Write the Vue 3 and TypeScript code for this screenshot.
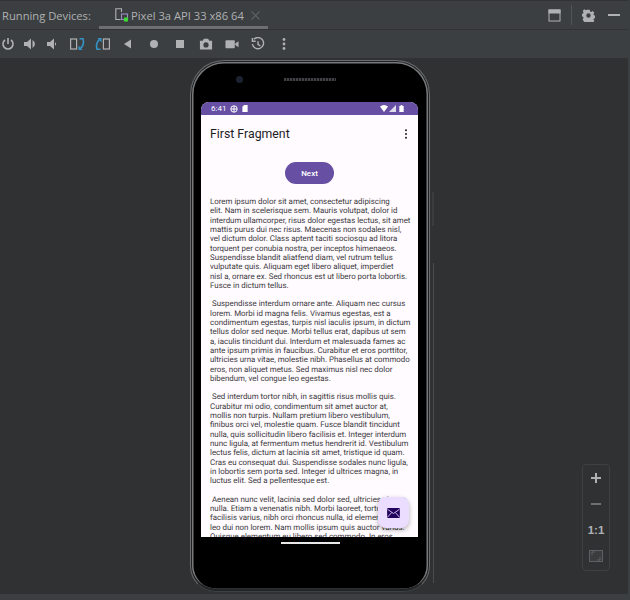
<script setup lang="ts">
const paragraphs: string[][] = [
  [
    'Lorem ipsum dolor sit amet, consectetur adipiscing',
    'elit. Nam in scelerisque sem. Mauris volutpat, dolor id',
    'interdum ullamcorper, risus dolor egestas lectus, sit amet',
    'mattis purus dui nec risus. Maecenas non sodales nisl,',
    'vel dictum dolor. Class aptent taciti sociosqu ad litora',
    'torquent per conubia nostra, per inceptos himenaeos.',
    'Suspendisse blandit aliatfend diam, vel rutrum tellus',
    'vulputate quis. Aliquam eget libero aliquet, imperdiet',
    'nisl a, ornare ex. Sed rhoncus est ut libero porta lobortis.',
    'Fusce in dictum tellus.',
  ],
  [
    ' Suspendisse interdum ornare ante. Aliquam nec cursus',
    'lorem. Morbi id magna felis. Vivamus egestas, est a',
    'condimentum egestas, turpis nisl iaculis ipsum, in dictum',
    'tellus dolor sed neque. Morbi tellus erat, dapibus ut sem',
    'a, iaculis tincidunt dui. Interdum et malesuada fames ac',
    'ante ipsum primis in faucibus. Curabitur et eros porttitor,',
    'ultricies urna vitae, molestie nibh. Phasellus at commodo',
    'eros, non aliquet metus. Sed maximus nisl nec dolor',
    'bibendum, vel congue leo egestas.',
  ],
  [
    ' Sed interdum tortor nibh, in sagittis risus mollis quis.',
    'Curabitur mi odio, condimentum sit amet auctor at,',
    'mollis non turpis. Nullam pretium libero vestibulum,',
    'finibus orci vel, molestie quam. Fusce blandit tincidunt',
    'nulla, quis sollicitudin libero facilisis et. Integer interdum',
    'nunc ligula, at fermentum metus hendrerit id. Vestibulum',
    'lectus felis, dictum at lacinia sit amet, tristique id quam.',
    'Cras eu consequat dui. Suspendisse sodales nunc ligula,',
    'in lobortis sem porta sed. Integer id ultrices magna, in',
    'luctus elit. Sed a pellentesque est.',
  ],
  [
    ' Aenean nunc velit, lacinia sed dolor sed, ultricies viverra',
    'nulla. Etiam a venenatis nibh. Morbi laoreet, tortor a',
    'facilisis varius, nibh orci rhoncus nulla, id elementum',
    'leo dui non lorem. Nam mollis ipsum quis auctor varius.',
    'Quisque elementum eu libero sed commodo. In eros',
  ],
]
</script>

<template>
  <div class="window">
    <header class="tabs">
      <span class="title">Running Devices:</span>
      <div class="tab">
        <svg class="tab-icon" width="14" height="14" viewBox="0 0 14 14" fill="none">
          <path d="M5.500 11.500H.8V.8H6.500V4" stroke="#afb1b3" stroke-width="1.100" />
          <rect x="6.500" y="6" width="6" height="5.500" stroke="#9a8cc0" stroke-width="1.100" />
          <rect x="9" y="9.500" width="4" height="4" fill="#3ddc35" />
        </svg>
        <span class="tab-label">Pixel 3a API 33 x86 64</span>
        <svg class="tab-close" width="9" height="9" viewBox="0 0 9 9">
          <path d="M.5.5L8.500 8.500M8.500.5L.5 8.500" stroke="#5f6365" stroke-width="1.100" />
        </svg>
      </div>
      <div class="tab-actions">
        <svg width="13" height="13" viewBox="0 0 13 13" fill="none">
          <rect x="1" y="1" width="11" height="11" stroke="#afb1b3" />
          <rect x=".5" y=".5" width="12" height="4" fill="#afb1b3" />
        </svg>
        <i class="divider"></i>
        <svg width="13" height="13" viewBox="0 0 14 14">
          <path fill="#afb1b3" fill-rule="evenodd" d="M5.700.8h2.600l.4 1.800 1.200.5 1.600-1 1.800 1.900-1 1.500.5 1.200 1.800.4v2.600l-1.800.4-.5 1.200 1 1.500-1.800 1.900-1.600-1-1.200.5-.4 1.800H5.700l-.4-1.800-1.200-.5-1.600 1L.7 11l1-1.500-.5-1.200-1.800-.4V5.300l1.800-.4.5-1.200-1-1.500L2.500.3l1.600 1 1.200-.5zM7 4.600a2.400 2.400 0 1 0 0 4.800 2.400 2.400 0 0 0 0-4.800z" />
        </svg>
        <i class="minimize"></i>
      </div>
    </header>

    <nav class="toolbar">
      <svg class="tight" width="14" height="14" viewBox="0 0 14 14" fill="none" stroke="#afb1b3" stroke-width="1.600">
        <path d="M7 1v6M4 3a5 5 0 1 0 6 0" />
      </svg>
      <svg class="tight" width="14" height="14" viewBox="0 0 14 14" fill="#afb1b3">
        <path d="M1 5h3l4-3.500v11L4 9H1z" />
        <path d="M9.500 3a4.500 4.500 0 0 1 0 8z" />
      </svg>
      <svg class="before-rotate" width="14" height="14" viewBox="0 0 14 14" fill="#afb1b3">
        <path d="M2 5h3l4-3.500v11L5 9H2z" />
        <path d="M10 5.200a2 2 0 0 1 0 3.600z" />
      </svg>
      <svg class="rotate-left" width="15" height="14" viewBox="0 0 15 14" fill="none">
        <rect x=".6" y="2" width="6" height="10" stroke="#afb1b3" stroke-width="1.200" />
        <path d="M9.500 1.800H13l.5 3c0 3-1 5-3 6.500" stroke="#3592c4" stroke-width="1.600" />
        <path d="M8.500 8.500l4 4.500H8.500z" fill="#3592c4" />
      </svg>
      <svg class="rotate-right" width="15" height="14" viewBox="0 0 15 14" fill="none">
        <rect x="8.400" y="2" width="6" height="10" stroke="#afb1b3" stroke-width="1.200" />
        <path d="M5.500 12.200H2l-.5-3c0-3 1-5 3-6.500" stroke="#3592c4" stroke-width="1.600" />
        <path d="M6.500 5.500L2.500 1H6.500z" fill="#3592c4" />
      </svg>
      <svg width="14" height="14" viewBox="0 0 14 14" fill="#afb1b3"><path d="M3 7l7-4.500v9z" /></svg>
      <svg width="14" height="14" viewBox="0 0 14 14" fill="#afb1b3"><circle cx="7" cy="7" r="4" /></svg>
      <svg width="14" height="14" viewBox="0 0 14 14" fill="#afb1b3"><rect x="3" y="3" width="8" height="8" /></svg>
      <svg width="14" height="14" viewBox="0 0 15 14">
        <path fill="#afb1b3" fill-rule="evenodd" d="M1 3.500h3L5.200 1.500h4.600L11 3.500h3V13H1zM7.500 5.200a2.800 2.800 0 1 0 0 5.600 2.800 2.800 0 0 0 0-5.600z" />
      </svg>
      <svg width="14" height="14" viewBox="0 0 15 14" fill="#afb1b3">
        <rect x=".5" y="3" width="10" height="8.500" rx="1" />
        <path d="M11 6.500l3.500-2.500v6.500L11 8z" />
      </svg>
      <svg width="14" height="14" viewBox="0 0 15 15" fill="none" stroke="#afb1b3" stroke-width="1.500">
        <path d="M3 2.500a6 6 0 1 1-1.500 5" />
        <path d="M1.500 1v3.500H5M7.500 4.500V8l2.500 1.500" />
      </svg>
      <svg width="14" height="14" viewBox="0 0 14 14" fill="#afb1b3">
        <circle cx="7" cy="2.500" r="1.400" />
        <circle cx="7" cy="7" r="1.400" />
        <circle cx="7" cy="11.500" r="1.400" />
      </svg>
    </nav>

    <main class="canvas">
      <div class="phone">
        <i class="side-key"></i>
        <i class="side-line"></i>
        <div class="bezel-top">
          <i class="camera"></i>
          <i class="speaker"></i>
        </div>
        <div class="screen">
          <div class="status">
            <span class="clock">6:41</span>
            <svg width="8" height="8" viewBox="0 0 8 8" fill="none" stroke="#fff">
              <circle cx="4" cy="4" r="3.200" />
              <path d="M4 1v6M1 4h6" />
            </svg>
            <svg class="sd" width="6" height="7" viewBox="0 0 6 8" fill="#fff"><path d="M2 0h4v8H0V2z" /></svg>
            <span class="status-right">
              <svg width="8" height="7" viewBox="0 0 8 7" fill="#fff"><path d="M0 1.500C2.500-.5 5.500-.5 8 1.500L4 7z" /></svg>
              <svg width="7" height="7" viewBox="0 0 7 7" fill="#fff"><path d="M7 0v7H0z" opacity=".8" /></svg>
              <svg class="battery" width="5" height="7" viewBox="0 0 5 8" fill="#fff"><path d="M1.500 0h2v1H5v7H0V1h1.500z" /></svg>
            </span>
          </div>
          <div class="appbar">
            <span class="appbar-title">First Fragment</span>
            <svg width="4" height="10" viewBox="0 0 4 10" fill="#1c1b1f">
              <circle cx="2" cy="1.300" r="1" />
              <circle cx="2" cy="5" r="1" />
              <circle cx="2" cy="8.700" r="1" />
            </svg>
          </div>
          <div class="content">
            <button class="next">Next</button>
            <p v-for="(lines, i) in paragraphs" :key="i" class="para">
              <span v-for="line in lines" :key="line" class="line">{{ line }}</span>
            </p>
          </div>
          <div class="fab">
            <svg width="13" height="10" viewBox="0 0 14 11">
              <rect width="14" height="11" rx="1" fill="#21005d" />
              <path d="M.5 1.500L7 6l6.500-4.500M.5 10L5 5M13.500 10L9 5" stroke="#eaddff" stroke-width=".9" fill="none" />
            </svg>
          </div>
        </div>
        <div class="bezel-bottom"><i class="home"></i></div>
      </div>

      <aside class="zoom">
        <span class="zoom-item"><svg width="12" height="12" viewBox="0 0 12 12" fill="#afb1b3"><path d="M5 1h2v4h4v2H7v4H5V7H1V5h4z" /></svg></span>
        <span class="zoom-item"><svg width="12" height="12" viewBox="0 0 12 12" fill="#6e7072"><rect x="1" y="5" width="10" height="2" /></svg></span>
        <span class="zoom-item one-to-one">1:1</span>
        <span class="zoom-item">
          <span class="fit"><svg width="10" height="10" viewBox="0 0 10 10" fill="none" stroke="#5e6163"><path d="M1 4V1h3M9 6v3H6" /></svg></span>
        </span>
      </aside>
    </main>

    <footer class="statusbar"></footer>
  </div>
</template>

<style>
html,
body {
  margin: 0;
  background: #2f3133;
}
</style>

<style scoped>
.window {
  width: 630px;
  height: 600px;
  overflow: hidden;
  display: flex;
  flex-direction: column;
  background: #2f3133;
  font-family: "Open Sans", "Liberation Sans", sans-serif;
  border-right: 2px solid #3c3f41;
  box-sizing: border-box;
}

.tabs {
  height: 29px;
  flex: none;
  display: flex;
  align-items: center;
  background: #3c3f41;
  border-top: 1px solid #323232;
  box-sizing: border-box;
  color: #afb1b3;
  font-size: 11.200px;
  white-space: nowrap;
}

.title {
  width: 99px;
  padding-left: 2px;
  box-sizing: border-box;
}

.tab {
  display: flex;
  align-items: center;
  height: 100%;
  width: 169px;
  padding: 3px 0 0 16px;
  box-sizing: border-box;
  border-bottom: 3px solid #6b6f72;
}

.tab-label {
  margin-left: 2px;
}

.tab-close {
  margin-left: 7px;
}

.tab-actions {
  margin-left: auto;
  display: flex;
  align-items: center;
  gap: 10px;
  padding-right: 8px;
}

.divider {
  width: 1px;
  height: 20px;
  background: #515557;
}

.minimize {
  width: 12px;
  height: 2px;
  margin-left: 3px;
  background: #afb1b3;
}

.toolbar {
  height: 30px;
  flex: none;
  display: flex;
  align-items: center;
  gap: 12px;
  padding-left: 1px;
  background: #3c3f41;
  border-top: 1px solid #323232;
  border-bottom: 1px solid #323232;
  box-sizing: border-box;
}

.tight {
  margin-right: -4px;
}

.before-rotate {
  margin-right: -1.500px;
}

.rotate-left {
  margin-right: -2px;
}

.rotate-right {
  margin-right: -0.500px;
}

.canvas {
  flex: 1;
  min-height: 0;
  position: relative;
  display: flex;
  justify-content: center;
  padding-top: 1px;
}

.phone {
  position: relative;
  width: 240px;
  height: 532px;
  margin-right: 8px;
  box-sizing: border-box;
  background: #000;
  border: 1px solid #6a6c6e;
  border-bottom-color: #3e4042;
  border-radius: 34px 34px 26px 26px;
  box-shadow: inset 0 -2.500px 0 #242526, inset 0 0 0 1px #1e1f20, inset 0 0 0 2.500px #77797b;
  display: flex;
  flex-direction: column;
  align-items: center;
}

.side-key {
  position: absolute;
  left: 241px;
  top: 131px;
  width: 2px;
  height: 34px;
  background: #3a3c3e;
}

.side-line {
  position: absolute;
  left: 242px;
  top: 202px;
  width: 1px;
  height: 320px;
  background: #4a4c4e;
}

.bezel-top {
  height: 41px;
  width: 100%;
  flex: none;
  position: relative;
}

.camera {
  position: absolute;
  left: 45px;
  top: 15px;
  width: 7px;
  height: 7px;
  border-radius: 50%;
  background: #1d2230;
}

.speaker {
  position: absolute;
  left: 93px;
  top: 17px;
  width: 52px;
  height: 3px;
  background: repeating-linear-gradient(90deg, #3f4144 0 2px, #15161a 2px 3px);
}

.screen {
  width: 217px;
  height: 435px;
  flex: none;
  margin-right: 1px;
  position: relative;
  overflow: hidden;
  border-radius: 8px 8px 0 0;
  background: #fffbfe;
  display: flex;
  flex-direction: column;
}

.status {
  height: 13px;
  flex: none;
  display: flex;
  align-items: center;
  gap: 3px;
  padding: 0 14px 0 10px;
  background: #6750a4;
  color: #fff;
  font: 8px Roboto, sans-serif;
}

.clock {
  margin-right: 1px;
}

.sd {
  margin-left: 1px;
}

.status-right {
  margin-left: auto;
  display: flex;
  align-items: center;
  gap: 1px;
}

.battery {
  margin-left: 2px;
}

.appbar {
  height: 37px;
  flex: none;
  display: flex;
  align-items: center;
  justify-content: space-between;
  padding: 0 10px 0 9px;
  color: #1c1b1f;
  font: 12.300px Roboto, sans-serif;
}

.content {
  display: flex;
  flex-direction: column;
  align-items: flex-start;
  padding: 10px 0 0 9px;
}

.next {
  align-self: center;
  margin: 0 0 13px -9px;
  width: 49px;
  height: 22px;
  padding: 0;
  border: 0;
  border-radius: 11px;
  background: #6750a4;
  color: #fff;
  font: 500 8px Roboto, sans-serif;
}

.para {
  margin: 0 0 9.200px;
  color: #3a393d;
  font: 7.900px/9.320px Roboto, sans-serif;
  text-rendering: geometricPrecision;
}

.line {
  display: block;
  white-space: pre;
}

.fab {
  position: absolute;
  right: 9px;
  bottom: 9px;
  width: 31px;
  height: 31px;
  border-radius: 8px;
  background: #eaddff;
  box-shadow: 0 2px 5px rgba(0, 0, 0, 0.3);
  display: flex;
  align-items: center;
  justify-content: center;
}

.bezel-bottom {
  flex: 1;
  width: 100%;
  display: flex;
  justify-content: center;
  padding-top: 5px;
  box-sizing: border-box;
}

.home {
  width: 59px;
  height: 2px;
  background: #e8e8e8;
}

.zoom {
  position: absolute;
  left: 582px;
  top: 405px;
  width: 28px;
  height: 107px;
  box-sizing: border-box;
  border: 1px solid #3e4042;
  border-radius: 4px;
  display: flex;
  flex-direction: column;
  align-items: center;
}

.zoom-item {
  height: 26px;
  display: flex;
  align-items: center;
  justify-content: center;
}

.one-to-one {
  color: #afb1b3;
  font: 700 11.500px "Liberation Sans", sans-serif;
}

.fit {
  width: 12px;
  height: 10px;
  border: 1px solid #5e6163;
  background: #3a3c3e;
  display: flex;
  align-items: center;
  justify-content: center;
}

.statusbar {
  height: 6px;
  flex: none;
  background: #3c3f41;
}
</style>
